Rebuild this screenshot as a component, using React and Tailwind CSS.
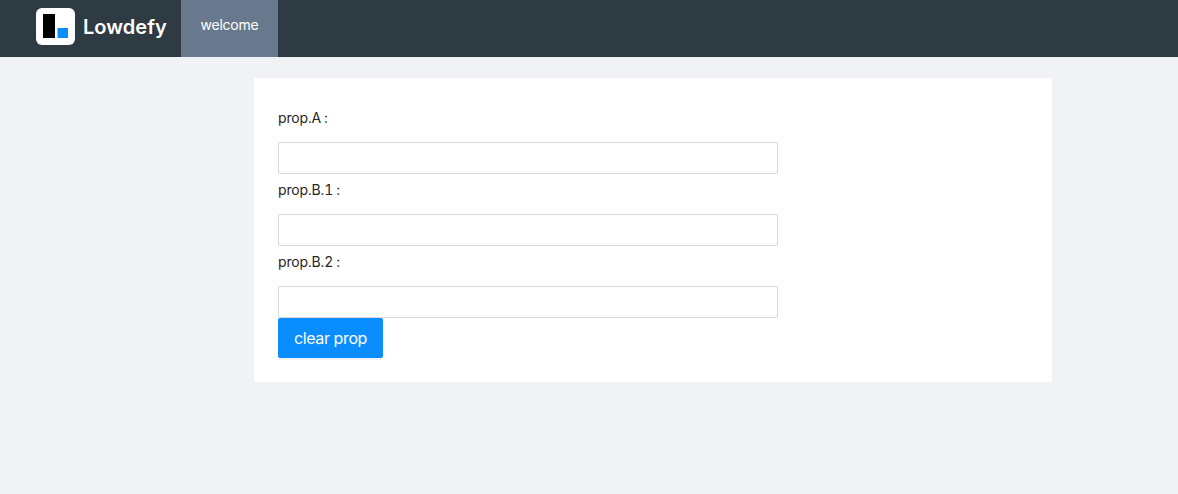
const font = { fontFamily: 'Inter, "Liberation Sans", sans-serif' };

function Field({ label }) {
  return (
    <div className="flex flex-col">
      <label className="h-8 mb-2 flex items-center pb-[2px] text-[14px] tracking-[-0.15px] tabular-nums text-[#262626]">
        {label}
        <span className="ml-[3px]">:</span>
      </label>
      <input className="w-[500px] h-8 bg-white border border-[#d9d9d9] rounded-[2px] outline-none" />
    </div>
  );
}

export default function App() {
  return (
    <div style={font} className="min-h-[494px] bg-[#f0f2f5] flex flex-col">
      <header className="h-[57px] bg-[#2f3b42] flex items-stretch pl-9">
        <div className="flex items-center w-[145px] pb-[4px]">
          <svg width="39" height="37" viewBox="0 0 39 37" className="shrink-0">
            <rect width="39" height="37" rx="6" fill="#fff" />
            <rect x="7" y="6" width="12" height="24" fill="#000" />
            <rect x="21.5" y="20" width="10.5" height="10" fill="#0a8dff" />
          </svg>
          <span className="ml-[8px] text-[20px] font-semibold text-white tracking-[0.05px]">Lowdefy</span>
        </div>
        <div className="w-[97px] bg-[#69798d] flex items-center justify-center pb-[8px] text-[14px] tracking-[-0.25px] text-white">
          welcome
        </div>
      </header>
      <main className="flex pt-[21px] pl-[254px]">
        <div className="w-[798px] bg-white p-6 flex flex-col">
          <Field label="prop.A" />
          <Field label="prop.B.1" />
          <Field label="prop.B.2" />
          <button className="w-[105px] h-10 bg-[#0a8dff] text-white text-[16px] tracking-[-0.4px] rounded-[2px] shadow-[0_2px_0_rgba(0,0,0,0.045)]">
            clear prop
          </button>
        </div>
      </main>
    </div>
  );
}
